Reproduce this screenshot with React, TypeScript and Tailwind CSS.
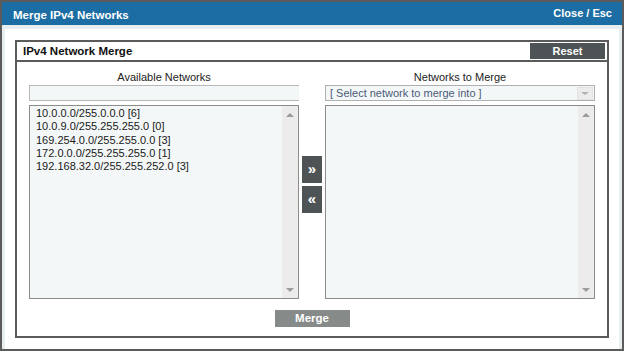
import React from "react";

const networks = [
  "10.0.0.0/255.0.0.0 [6]",
  "10.0.9.0/255.255.255.0 [0]",
  "169.254.0.0/255.255.0.0 [3]",
  "172.0.0.0/255.255.255.0 [1]",
  "192.168.32.0/255.255.252.0 [3]",
];

const Scrollbar: React.FC = () => (
  <div className="w-[16px] bg-[#ececec] flex flex-col justify-between items-center pt-[7px] pb-[6px]">
    <div className="w-0 h-0 border-x-[4px] border-x-transparent border-b-[4px] border-b-[#9c9c9c]" />
    <div className="w-0 h-0 border-x-[4px] border-x-transparent border-t-[4px] border-t-[#9c9c9c]" />
  </div>
);

const ListBox: React.FC<{ items: string[] }> = ({ items }) => (
  <div className="mt-[4px] h-[194px] border border-[#8c8c8c] bg-[#f4f7f8] flex">
    <div className="flex-1 pl-[6px] pt-[1px] text-[11px] leading-[13.3px] text-[#1a1a1a]">
      {items.map((item, i) => (
        <div key={i}>{item}</div>
      ))}
    </div>
    <Scrollbar />
  </div>
);

export default function App() {
  return (
    <div className="w-[624px] h-[351px] border-2 border-[#5b5b5b] bg-white flex flex-col font-['Liberation_Sans',Arial,sans-serif]">
      {/* TITLE BAR */}
      <div className="h-[23px] bg-[#1b6da3] flex items-start justify-between pl-[11px] pr-[10px] text-white font-bold">
        <span className="text-[11.5px] leading-[14px] mt-[6px]">Merge IPv4 Networks</span>
        <span className="text-[11px] leading-[14px] mt-[4px]">Close / Esc</span>
      </div>

      {/* CONTENT */}
      <div className="flex-1 border-t-[4px] border-x-[3px] border-[#e8edf0] pt-[11px] pb-[11px] px-[10px]">
        <div className="h-[298px] border-2 border-[#5b5b5b] flex flex-col">
          {/* HEADER */}
          <div className="h-[20px] border-b-2 border-[#5b5b5b] flex items-start justify-between pl-[6px] pr-[2px]">
            <span className="text-[11.5px] leading-[18px] font-bold text-[#111]">IPv4 Network Merge</span>
            <button className="mt-[1px] h-[16px] w-[75px] bg-[#4e5455] text-white font-bold text-[11px] leading-[16px]">
              Reset
            </button>
          </div>

          {/* BODY */}
          <div className="flex-1 flex flex-col px-[12px] pt-[8px]">
            <div className="flex">
              <div className="w-[270px] flex flex-col">
                <div className="text-[11px] leading-[14px] text-center text-[#222] mb-[1px]">
                  Available Networks
                </div>
                <div className="h-[16px] border border-r-0 border-[#b8b8b8] bg-[#f4f7f8]" />
                <ListBox items={networks} />
              </div>

              <div className="w-[26px] flex flex-col items-center pt-[86px] gap-[3px]">
                <button className="w-[20px] h-[27px] bg-[#4e5455] text-white font-bold text-[15px] leading-none flex items-center justify-center pb-[2px]">
                  »
                </button>
                <button className="w-[20px] h-[27px] bg-[#4e5455] text-white font-bold text-[15px] leading-none flex items-center justify-center pb-[2px]">
                  «
                </button>
              </div>

              <div className="w-[270px] flex flex-col">
                <div className="text-[11px] leading-[14px] text-center text-[#222] mb-[1px]">
                  Networks to Merge
                </div>
                <div className="h-[16px] border border-[#b0b0b0] bg-[#f4f7f8] flex items-center justify-between">
                  <span className="pl-[4px] text-[11px] leading-[14px] text-[#4b5a78]">
                    [ Select network to merge into ]
                  </span>
                  <div className="w-[16px] h-[13px] mr-[1px] bg-[#ececec] border border-[#e2e2e2] flex items-center justify-center">
                    <div className="w-0 h-0 border-x-[4px] border-x-transparent border-t-[3px] border-t-[#b0b0b0]" />
                  </div>
                </div>
                <ListBox items={[]} />
              </div>
            </div>

            <button className="mt-[11px] self-center w-[75px] h-[17px] bg-[#868a89] text-white font-bold text-[11.5px] leading-[17px]">
              Merge
            </button>
          </div>
        </div>
      </div>
    </div>
  );
}
